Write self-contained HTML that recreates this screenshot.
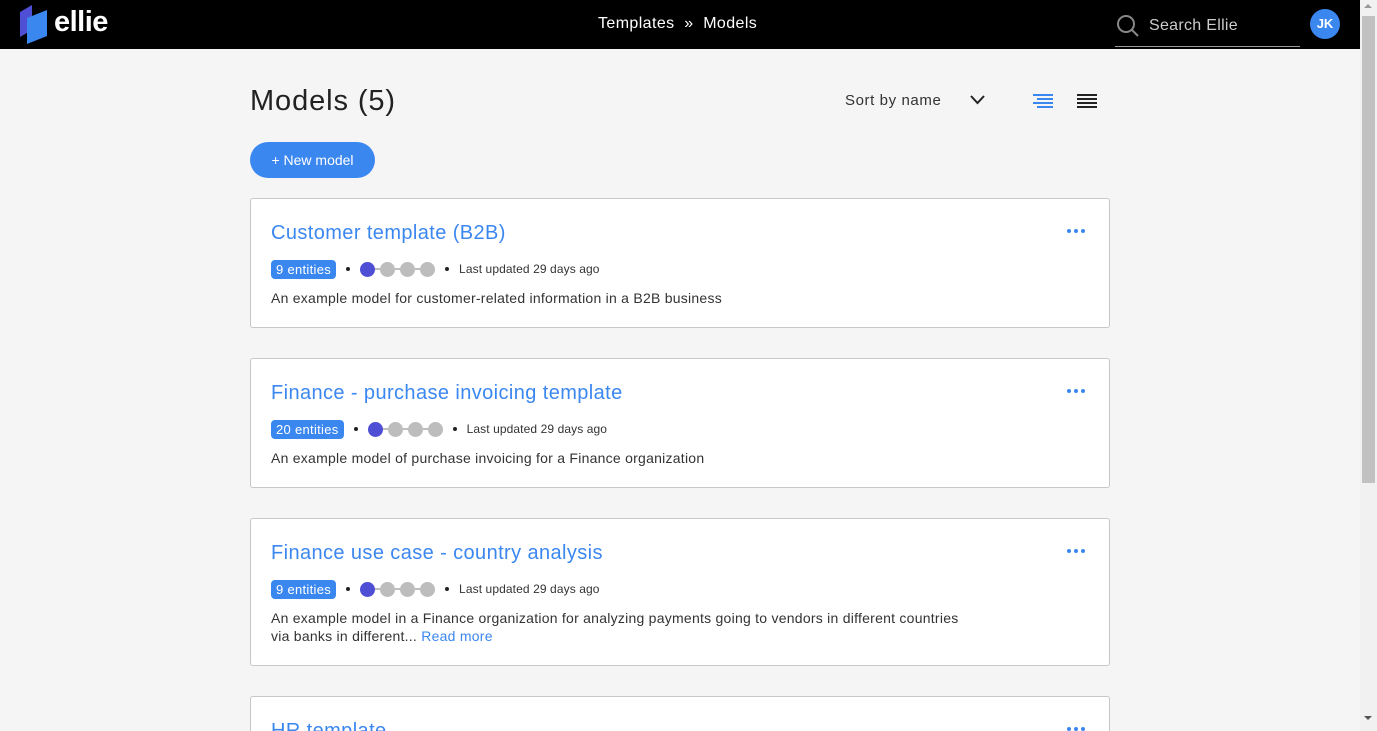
<!DOCTYPE html>
<html style="height:731px;overflow:hidden"><head><style>
*{box-sizing:border-box;margin:0;padding:0}
body{width:1377px;height:731px;overflow:hidden;background:#f5f5f5;font-family:"Liberation Sans",Arial,sans-serif;position:relative}
.top{position:absolute;left:0;top:0;width:1360px;height:49px;background:#000;color:#fff}
.sb{position:absolute;right:0;top:0;width:17px;height:731px;background:#f1f1f1;z-index:5}
.thumb{position:absolute;left:2px;top:16px;width:13px;height:467px;background:#c1c1c1}
.card{position:absolute;left:250px;width:860px;background:#fff;border:1px solid #c8c8c8;border-radius:3px}
.card h2{position:absolute;left:20px;top:23px;font-size:20px;font-weight:normal;color:#3b87f0;letter-spacing:0.4px}
.meta{position:absolute;left:20px;top:60px;height:20px;display:flex;align-items:center;font-size:12px;color:#333;letter-spacing:0.1px}
.badge{background:#3b87f0;color:#fff;font-size:13px;padding:2px 5px;border-radius:4px;letter-spacing:0.3px}
.dot{width:4px;height:4px;border-radius:2px;background:#222;margin:0 10px}
.c{width:15px;height:15px;border-radius:8px;background:#bdbdbd;position:relative}
.l{width:5px;height:2px;background:#bdbdbd}
.desc{position:absolute;left:20px;top:90px;font-size:14px;color:#333;line-height:18px;letter-spacing:0.25px}
.more{position:absolute;right:24px;top:30px;display:flex;gap:3px}
.more i{width:4px;height:4px;border-radius:2px;background:#3b87f0}
</style></head><body>
<div class="top">
<svg style="position:absolute;left:18px;top:4px" width="30" height="40" viewBox="0 0 30 40"><polygon points="2,8 14,1 14,26 2,33" fill="#4f4fd6"/><polygon points="9,14 29,6 29,32 9,40" fill="#3b87f0"/></svg>
<div style="position:absolute;left:54px;top:6px;font-size:29px;font-weight:bold;letter-spacing:-0.5px">ellie</div>
<div style="position:absolute;left:598px;top:15px;font-size:16px;letter-spacing:0.4px">Templates &nbsp;»&nbsp; Models</div>
<svg style="position:absolute;left:1116px;top:14px" width="24" height="24" viewBox="0 0 24 24"><circle cx="10" cy="10" r="8" fill="none" stroke="#888" stroke-width="2"/><line x1="16" y1="16" x2="22" y2="22" stroke="#888" stroke-width="2"/></svg>
<div style="position:absolute;left:1149px;top:17px;font-size:16px;color:#ccc;letter-spacing:0.3px">Search Ellie</div>
<div style="position:absolute;left:1115px;top:46px;width:185px;height:1px;background:#999"></div>
<div style="position:absolute;left:1310px;top:9px;width:30px;height:30px;border-radius:15px;background:#3b87f0;font-size:13px;font-weight:bold;text-align:center;line-height:30px">JK</div>
</div>
<div class="sb"><div style="position:absolute;left:4px;top:4px;border:4px solid transparent;border-bottom:4px solid #999;border-top:none"></div><div class="thumb"></div><div style="position:absolute;left:4px;top:716px;border:4px solid transparent;border-top:4px solid #555;border-bottom:none"></div></div>
<div style="position:absolute;left:250px;top:85px;font-size:29px;color:#222;letter-spacing:0.9px">Models (5)</div>
<div style="position:absolute;left:845px;top:92px;font-size:15px;color:#333;letter-spacing:0.6px">Sort by name</div>
<svg style="position:absolute;left:970px;top:95px" width="15" height="10"><polyline points="1,1 7.5,8 14,1" fill="none" stroke="#222" stroke-width="2"/></svg>
<svg style="position:absolute;left:1033px;top:94px" width="20" height="14"><rect x="0" y="0" width="20" height="2" fill="#3b87f0"/><rect x="4" y="4" width="16" height="2" fill="#3b87f0"/><rect x="0" y="8" width="20" height="2" fill="#3b87f0"/><rect x="4" y="12" width="16" height="2" fill="#3b87f0"/></svg>
<svg style="position:absolute;left:1077px;top:94px" width="20" height="14"><rect y="0" width="20" height="2" fill="#222"/><rect y="4" width="20" height="2" fill="#222"/><rect y="8" width="20" height="2" fill="#222"/><rect y="12" width="20" height="2" fill="#222"/></svg>
<div style="position:absolute;left:250px;top:142px;width:125px;height:36px;border-radius:18px;background:#3b87f0;color:#fff;font-size:14px;text-align:center;line-height:36px">+ New model</div>

<div class="card" style="top:198px;height:130px"><h2>Customer template (B2B)</h2><div class="more"><i></i><i></i><i></i></div>
<div class="meta"><span class="badge">9 entities</span><span class="dot"></span><span class="c" style="background:#4f4fd6"></span><span class="l"></span><span class="c"></span><span class="l"></span><span class="c"></span><span class="l"></span><span class="c"></span><span class="dot"></span>Last updated 29 days ago</div>
<div class="desc">An example model for customer-related information in a B2B business</div></div>

<div class="card" style="top:358px;height:130px"><h2>Finance - purchase invoicing template</h2><div class="more"><i></i><i></i><i></i></div>
<div class="meta"><span class="badge">20 entities</span><span class="dot"></span><span class="c" style="background:#4f4fd6"></span><span class="l"></span><span class="c"></span><span class="l"></span><span class="c"></span><span class="l"></span><span class="c"></span><span class="dot"></span>Last updated 29 days ago</div>
<div class="desc">An example model of purchase invoicing for a Finance organization</div></div>

<div class="card" style="top:518px;height:148px"><h2>Finance use case - country analysis</h2><div class="more"><i></i><i></i><i></i></div>
<div class="meta"><span class="badge">9 entities</span><span class="dot"></span><span class="c" style="background:#4f4fd6"></span><span class="l"></span><span class="c"></span><span class="l"></span><span class="c"></span><span class="l"></span><span class="c"></span><span class="dot"></span>Last updated 29 days ago</div>
<div class="desc">An example model in a Finance organization for analyzing payments going to vendors in different countries<br>via banks in different... <span style="color:#3b87f0">Read more</span></div></div>

<div class="card" style="top:696px;height:35px;border-bottom:none;border-radius:3px 3px 0 0;overflow:hidden"><h2>HR template</h2><div class="more"><i></i><i></i><i></i></div></div>
</body></html>
